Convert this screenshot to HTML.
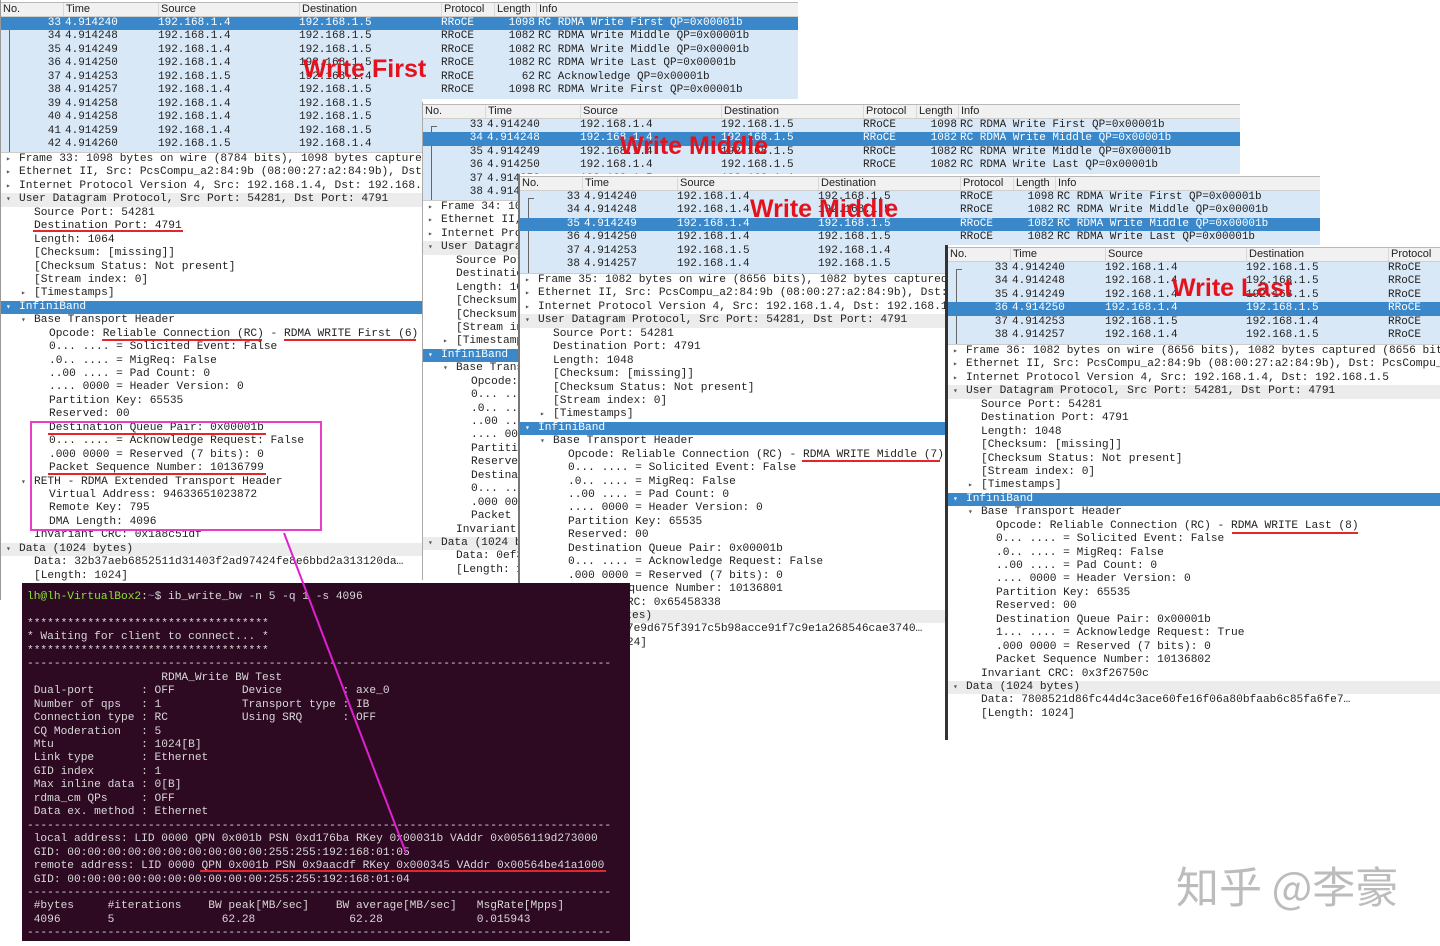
<!DOCTYPE html>
<html><head><meta charset="utf-8"><style>
*{margin:0;padding:0;box-sizing:border-box}
body{width:1440px;height:946px;position:relative;background:#fff;overflow:hidden;font-family:"Liberation Sans",sans-serif}
.p{position:absolute;background:#fff;overflow:hidden}
.hd{position:absolute;left:0;right:0;top:2px;height:15px;background:#f1f1f1;border-top:1px solid #b8b8b8;border-bottom:1px solid #cfcfcf;font:11px/13px "Liberation Sans",sans-serif;color:#222}
.hd span{position:absolute;top:0;border-left:1px solid #d8d8d8;padding-left:2px;height:13px}
.ls{position:absolute;left:0;right:0;top:17px;background:#d9e8f7}
.r{position:relative;height:13.45px;font:11px/13.45px "Liberation Mono",monospace;color:#222;white-space:pre}
.r.sel{background:#3a87c9;color:#fff}
.r span{position:absolute;top:0}
.a{left:0;width:60px;text-align:right}.b{left:64px}.c{left:157px}.d{left:298px}.e{left:440px}.f{left:494px;width:40px;text-align:right}.g{left:537px}
.br{position:absolute;left:8px;top:7px;bottom:0;border-left:1px solid #666}
.br:before{content:"";position:absolute;left:0;top:0;width:5px;border-top:1px solid #666}
.t{position:absolute;left:0;right:0;font:11.2px/13.45px "Liberation Mono",monospace;color:#222;white-space:normal}
.t div{position:relative;height:13.45px;white-space:pre}
.l0{padding-left:18px}.l1{padding-left:33px}.l2{padding-left:48px}
.cl:before,.op:before{position:absolute;font-size:8px;color:#555;top:0}
.l0.cl:before{content:"▸";left:5px}.l0.op:before{content:"▾";left:5px}
.l1.cl:before{content:"▸";left:20px}.l1.op:before{content:"▾";left:20px}
.gr{background:#ececec}
.sl{background:#3a87c9;color:#fff}
.sl:before{color:#fff!important}
.lab{position:absolute;font:bold 25px/25px "Liberation Sans",sans-serif;color:#e3121c;white-space:nowrap}
.ul{position:absolute;height:2px;background:#e3262c}
.term{position:absolute;left:22px;top:583px;width:608px;height:358px;background:#2d0a22;color:#d8d8d8;font:11.2px/13.45px "Liberation Mono",monospace;white-space:pre;padding:8px 0 0 5px;overflow:hidden}
</style></head><body>

<!-- PANEL 1 -->
<div class="p" style="left:0;top:0;width:798px;height:600px;border-left:1px solid #999">
 <div class="hd"><span style="left:0;border:0">No.</span><span style="left:62px">Time</span><span style="left:157px">Source</span><span style="left:298px">Destination</span><span style="left:440px">Protocol</span><span style="left:493px">Length</span><span style="left:535px">Info</span></div>
 <div class="ls" style="height:135px">
  <div class="br"></div>
  <div class="r sel"><span class="a">33</span><span class="b">4.914240</span><span class="c">192.168.1.4</span><span class="d">192.168.1.5</span><span class="e">RRoCE</span><span class="f">1098</span><span class="g">RC RDMA Write First QP=0x00001b</span></div>
  <div class="r"><span class="a">34</span><span class="b">4.914248</span><span class="c">192.168.1.4</span><span class="d">192.168.1.5</span><span class="e">RRoCE</span><span class="f">1082</span><span class="g">RC RDMA Write Middle QP=0x00001b</span></div>
  <div class="r"><span class="a">35</span><span class="b">4.914249</span><span class="c">192.168.1.4</span><span class="d">192.168.1.5</span><span class="e">RRoCE</span><span class="f">1082</span><span class="g">RC RDMA Write Middle QP=0x00001b</span></div>
  <div class="r"><span class="a">36</span><span class="b">4.914250</span><span class="c">192.168.1.4</span><span class="d">192.168.1.5</span><span class="e">RRoCE</span><span class="f">1082</span><span class="g">RC RDMA Write Last QP=0x00001b</span></div>
  <div class="r"><span class="a">37</span><span class="b">4.914253</span><span class="c">192.168.1.5</span><span class="d">192.168.1.4</span><span class="e">RRoCE</span><span class="f">62</span><span class="g">RC Acknowledge QP=0x00001b</span></div>
  <div class="r"><span class="a">38</span><span class="b">4.914257</span><span class="c">192.168.1.4</span><span class="d">192.168.1.5</span><span class="e">RRoCE</span><span class="f">1098</span><span class="g">RC RDMA Write First QP=0x00001b</span></div>
  <div class="r"><span class="a">39</span><span class="b">4.914258</span><span class="c">192.168.1.4</span><span class="d">192.168.1.5</span></div>
  <div class="r"><span class="a">40</span><span class="b">4.914258</span><span class="c">192.168.1.4</span><span class="d">192.168.1.5</span></div>
  <div class="r"><span class="a">41</span><span class="b">4.914259</span><span class="c">192.168.1.4</span><span class="d">192.168.1.5</span></div>
  <div class="r"><span class="a">42</span><span class="b">4.914260</span><span class="c">192.168.1.5</span><span class="d">192.168.1.4</span></div>
 </div>
 <div class="t" style="top:152px;border-top:1px solid #ccc">
<div class="l0 cl">Frame 33: 1098 bytes on wire (8784 bits), 1098 bytes captured (8784 bits)</div>
<div class="l0 cl">Ethernet II, Src: PcsCompu_a2:84:9b (08:00:27:a2:84:9b), Dst: PcsCompu_</div>
<div class="l0 cl">Internet Protocol Version 4, Src: 192.168.1.4, Dst: 192.168.1.5</div>
<div class="l0 op gr">User Datagram Protocol, Src Port: 54281, Dst Port: 4791</div>
<div class="l1">Source Port: 54281</div>
<div class="l1">Destination Port: 4791</div>
<div class="l1">Length: 1064</div>
<div class="l1">[Checksum: [missing]]</div>
<div class="l1">[Checksum Status: Not present]</div>
<div class="l1">[Stream index: 0]</div>
<div class="l1 cl">[Timestamps]</div>
<div class="l0 op sl">InfiniBand</div>
<div class="l1 op">Base Transport Header</div>
<div class="l2">Opcode: Reliable Connection (RC) - RDMA WRITE First (6)</div>
<div class="l2">0... .... = Solicited Event: False</div>
<div class="l2">.0.. .... = MigReq: False</div>
<div class="l2">..00 .... = Pad Count: 0</div>
<div class="l2">.... 0000 = Header Version: 0</div>
<div class="l2">Partition Key: 65535</div>
<div class="l2">Reserved: 00</div>
<div class="l2">Destination Queue Pair: 0x00001b</div>
<div class="l2">0... .... = Acknowledge Request: False</div>
<div class="l2">.000 0000 = Reserved (7 bits): 0</div>
<div class="l2">Packet Sequence Number: 10136799</div>
<div class="l1 op">RETH - RDMA Extended Transport Header</div>
<div class="l2">Virtual Address: 94633651023872</div>
<div class="l2">Remote Key: 795</div>
<div class="l2">DMA Length: 4096</div>
<div class="l1">Invariant CRC: 0x1a8c51df</div>
<div class="l0 op gr">Data (1024 bytes)</div>
<div class="l1">Data: 32b37aeb6852511d31403f2ad97424fe8e6bbd2a313120da…</div>
<div class="l1">[Length: 1024]</div>
 </div>
</div>
<div style="position:absolute;left:422px;top:99px;width:376px;height:5px;background:#fff"></div>

<!-- PANEL 2 -->
<div class="p" style="left:422px;top:102px;width:818px;height:478px;border-left:1px solid #aaa">
 <div class="hd"><span style="left:0;border:0">No.</span><span style="left:62px">Time</span><span style="left:157px">Source</span><span style="left:298px">Destination</span><span style="left:440px">Protocol</span><span style="left:493px">Length</span><span style="left:535px">Info</span></div>
 <div class="ls" style="height:81px">
  <div class="br"></div>
  <div class="r"><span class="a">33</span><span class="b">4.914240</span><span class="c">192.168.1.4</span><span class="d">192.168.1.5</span><span class="e">RRoCE</span><span class="f">1098</span><span class="g">RC RDMA Write First QP=0x00001b</span></div>
  <div class="r sel"><span class="a">34</span><span class="b">4.914248</span><span class="c">192.168.1.4</span><span class="d">192.168.1.5</span><span class="e">RRoCE</span><span class="f">1082</span><span class="g">RC RDMA Write Middle QP=0x00001b</span></div>
  <div class="r"><span class="a">35</span><span class="b">4.914249</span><span class="c">192.168.1.4</span><span class="d">192.168.1.5</span><span class="e">RRoCE</span><span class="f">1082</span><span class="g">RC RDMA Write Middle QP=0x00001b</span></div>
  <div class="r"><span class="a">36</span><span class="b">4.914250</span><span class="c">192.168.1.4</span><span class="d">192.168.1.5</span><span class="e">RRoCE</span><span class="f">1082</span><span class="g">RC RDMA Write Last QP=0x00001b</span></div>
  <div class="r"><span class="a">37</span><span class="b">4.914253</span><span class="c">192.168.1.5</span><span class="d">192.168.1.4</span></div>
  <div class="r"><span class="a">38</span><span class="b">4.914257</span><span class="c">192.168.1.4</span><span class="d">192.168.1.5</span></div>
 </div>
 <div class="t" style="top:98px;border-top:1px solid #ccc">
<div class="l0 cl">Frame 34: 1082 bytes on wire (8656 bits), 1082 bytes captured</div>
<div class="l0 cl">Ethernet II, Src: PcsCompu_a2:84:9b</div>
<div class="l0 cl">Internet Protocol Version 4</div>
<div class="l0 op gr">User Datagram Protocol</div>
<div class="l1">Source Port: 54281</div>
<div class="l1">Destination Port: 4791</div>
<div class="l1">Length: 1048</div>
<div class="l1">[Checksum: [missing]]</div>
<div class="l1">[Checksum Status: Not present]</div>
<div class="l1">[Stream index: 0]</div>
<div class="l1 cl">[Timestamps]</div>
<div class="l0 op sl">InfiniBand</div>
<div class="l1 op">Base Transport Header</div>
<div class="l2">Opcode: Reliable Connection (RC)</div>
<div class="l2">0... .... = Solicited Event: False</div>
<div class="l2">.0.. .... = MigReq: False</div>
<div class="l2">..00 .... = Pad Count: 0</div>
<div class="l2">.... 0000 = Header Version: 0</div>
<div class="l2">Partition Key: 65535</div>
<div class="l2">Reserved: 00</div>
<div class="l2">Destination Queue Pair: 0x00001b</div>
<div class="l2">0... .... = Acknowledge Request</div>
<div class="l2">.000 0000 = Reserved (7 bits): 0</div>
<div class="l2">Packet Sequence Number: 10136800</div>
<div class="l1">Invariant CRC: 0x5a1b22c4</div>
<div class="l0 op gr">Data (1024 bytes)</div>
<div class="l1">Data: 0ef3a1</div>
<div class="l1">[Length: 1024]</div>
 </div>
</div>

<!-- PANEL 3 -->
<div class="p" style="left:518px;top:174px;width:802px;height:476px;border-left:2px solid #777">
 <div class="hd"><span style="left:0;border:0">No.</span><span style="left:62px">Time</span><span style="left:157px">Source</span><span style="left:298px">Destination</span><span style="left:440px">Protocol</span><span style="left:493px">Length</span><span style="left:535px">Info</span></div>
 <div class="ls" style="height:82px">
  <div class="br"></div>
  <div class="r"><span class="a">33</span><span class="b">4.914240</span><span class="c">192.168.1.4</span><span class="d">192.168.1.5</span><span class="e">RRoCE</span><span class="f">1098</span><span class="g">RC RDMA Write First QP=0x00001b</span></div>
  <div class="r"><span class="a">34</span><span class="b">4.914248</span><span class="c">192.168.1.4</span><span class="d">192.168.1.5</span><span class="e">RRoCE</span><span class="f">1082</span><span class="g">RC RDMA Write Middle QP=0x00001b</span></div>
  <div class="r sel"><span class="a">35</span><span class="b">4.914249</span><span class="c">192.168.1.4</span><span class="d">192.168.1.5</span><span class="e">RRoCE</span><span class="f">1082</span><span class="g">RC RDMA Write Middle QP=0x00001b</span></div>
  <div class="r"><span class="a">36</span><span class="b">4.914250</span><span class="c">192.168.1.4</span><span class="d">192.168.1.5</span><span class="e">RRoCE</span><span class="f">1082</span><span class="g">RC RDMA Write Last QP=0x00001b</span></div>
  <div class="r"><span class="a">37</span><span class="b">4.914253</span><span class="c">192.168.1.5</span><span class="d">192.168.1.4</span></div>
  <div class="r"><span class="a">38</span><span class="b">4.914257</span><span class="c">192.168.1.4</span><span class="d">192.168.1.5</span></div>
 </div>
 <div class="t" style="top:99px;border-top:1px solid #ccc">
<div class="l0 cl">Frame 35: 1082 bytes on wire (8656 bits), 1082 bytes captured (8656 bits)</div>
<div class="l0 cl">Ethernet II, Src: PcsCompu_a2:84:9b (08:00:27:a2:84:9b), Dst: PcsCompu_</div>
<div class="l0 cl">Internet Protocol Version 4, Src: 192.168.1.4, Dst: 192.168.1.5</div>
<div class="l0 op gr">User Datagram Protocol, Src Port: 54281, Dst Port: 4791</div>
<div class="l1">Source Port: 54281</div>
<div class="l1">Destination Port: 4791</div>
<div class="l1">Length: 1048</div>
<div class="l1">[Checksum: [missing]]</div>
<div class="l1">[Checksum Status: Not present]</div>
<div class="l1">[Stream index: 0]</div>
<div class="l1 cl">[Timestamps]</div>
<div class="l0 op sl">InfiniBand</div>
<div class="l1 op">Base Transport Header</div>
<div class="l2">Opcode: Reliable Connection (RC) - RDMA WRITE Middle (7)</div>
<div class="l2">0... .... = Solicited Event: False</div>
<div class="l2">.0.. .... = MigReq: False</div>
<div class="l2">..00 .... = Pad Count: 0</div>
<div class="l2">.... 0000 = Header Version: 0</div>
<div class="l2">Partition Key: 65535</div>
<div class="l2">Reserved: 00</div>
<div class="l2">Destination Queue Pair: 0x00001b</div>
<div class="l2">0... .... = Acknowledge Request: False</div>
<div class="l2">.000 0000 = Reserved (7 bits): 0</div>
<div class="l2">Packet Sequence Number: 10136801</div>
<div class="l1">Invariant CRC: 0x65458338</div>
<div class="l0 op gr">Data (1024 bytes)</div>
<div class="l1">Data: 5c01a7e9d675f3917c5b98acce91f7c9e1a268546cae3740…</div>
<div class="l1">[Length: 1024]</div>
 </div>
</div>

<!-- PANEL 4 -->
<div class="p" style="left:945px;top:245px;width:495px;height:495px;border-left:3px solid #333">
 <div class="hd"><span style="left:0;border:0">No.</span><span style="left:62px">Time</span><span style="left:157px">Source</span><span style="left:298px">Destination</span><span style="left:440px">Protocol</span></div>
 <div class="ls" style="height:82px">
  <div class="br"></div>
  <div class="r"><span class="a">33</span><span class="b">4.914240</span><span class="c">192.168.1.4</span><span class="d">192.168.1.5</span><span class="e">RRoCE</span></div>
  <div class="r"><span class="a">34</span><span class="b">4.914248</span><span class="c">192.168.1.4</span><span class="d">192.168.1.5</span><span class="e">RRoCE</span></div>
  <div class="r"><span class="a">35</span><span class="b">4.914249</span><span class="c">192.168.1.4</span><span class="d">192.168.1.5</span><span class="e">RRoCE</span></div>
  <div class="r sel"><span class="a">36</span><span class="b">4.914250</span><span class="c">192.168.1.4</span><span class="d">192.168.1.5</span><span class="e">RRoCE</span></div>
  <div class="r"><span class="a">37</span><span class="b">4.914253</span><span class="c">192.168.1.5</span><span class="d">192.168.1.4</span><span class="e">RRoCE</span></div>
  <div class="r"><span class="a">38</span><span class="b">4.914257</span><span class="c">192.168.1.4</span><span class="d">192.168.1.5</span><span class="e">RRoCE</span></div>
 </div>
 <div class="t" style="top:99px;border-top:1px solid #ccc">
<div class="l0 cl">Frame 36: 1082 bytes on wire (8656 bits), 1082 bytes captured (8656 bits)</div>
<div class="l0 cl">Ethernet II, Src: PcsCompu_a2:84:9b (08:00:27:a2:84:9b), Dst: PcsCompu_</div>
<div class="l0 cl">Internet Protocol Version 4, Src: 192.168.1.4, Dst: 192.168.1.5</div>
<div class="l0 op gr">User Datagram Protocol, Src Port: 54281, Dst Port: 4791</div>
<div class="l1">Source Port: 54281</div>
<div class="l1">Destination Port: 4791</div>
<div class="l1">Length: 1048</div>
<div class="l1">[Checksum: [missing]]</div>
<div class="l1">[Checksum Status: Not present]</div>
<div class="l1">[Stream index: 0]</div>
<div class="l1 cl">[Timestamps]</div>
<div class="l0 op sl">InfiniBand</div>
<div class="l1 op">Base Transport Header</div>
<div class="l2">Opcode: Reliable Connection (RC) - RDMA WRITE Last (8)</div>
<div class="l2">0... .... = Solicited Event: False</div>
<div class="l2">.0.. .... = MigReq: False</div>
<div class="l2">..00 .... = Pad Count: 0</div>
<div class="l2">.... 0000 = Header Version: 0</div>
<div class="l2">Partition Key: 65535</div>
<div class="l2">Reserved: 00</div>
<div class="l2">Destination Queue Pair: 0x00001b</div>
<div class="l2">1... .... = Acknowledge Request: True</div>
<div class="l2">.000 0000 = Reserved (7 bits): 0</div>
<div class="l2">Packet Sequence Number: 10136802</div>
<div class="l1">Invariant CRC: 0x3f26750c</div>
<div class="l0 op gr">Data (1024 bytes)</div>
<div class="l1">Data: 7808521d86fc44d4c3ace60fe16f06a80bfaab6c85fa6fe7…</div>
<div class="l1">[Length: 1024]</div>
 </div>
</div>

<!-- TERMINAL -->
<div class="term"><span style="color:#8ae234">lh@lh-VirtualBox2</span>:<span style="color:#729fcf">~</span>$ ib_write_bw -n 5 -q 1 -s 4096

************************************
* Waiting for client to connect... *
************************************
---------------------------------------------------------------------------------------
                    RDMA_Write BW Test
 Dual-port       : OFF          Device         : axe_0
 Number of qps   : 1            Transport type : IB
 Connection type : RC           Using SRQ      : OFF
 CQ Moderation   : 5
 Mtu             : 1024[B]
 Link type       : Ethernet
 GID index       : 1
 Max inline data : 0[B]
 rdma_cm QPs     : OFF
 Data ex. method : Ethernet
---------------------------------------------------------------------------------------
 local address: LID 0000 QPN 0x001b PSN 0xd176ba RKey 0x00031b VAddr 0x0056119d273000
 GID: 00:00:00:00:00:00:00:00:00:00:255:255:192:168:01:05
 remote address: LID 0000 QPN 0x001b PSN 0x9aacdf RKey 0x000345 VAddr 0x00564be41a1000
 GID: 00:00:00:00:00:00:00:00:00:00:255:255:192:168:01:04
---------------------------------------------------------------------------------------
 #bytes     #iterations    BW peak[MB/sec]    BW average[MB/sec]   MsgRate[Mpps]
 4096       5                62.28              62.28              0.015943
---------------------------------------------------------------------------------------</div>

<!-- annotations -->
<div class="ul" style="left:33px;top:230px;width:150px"></div>
<div class="ul" style="left:102px;top:339px;width:160px"></div>
<div class="ul" style="left:284px;top:339px;width:132px"></div>
<div class="ul" style="left:48px;top:433px;width:218px"></div>
<div class="ul" style="left:48px;top:473px;width:218px"></div>
<div class="ul" style="left:802px;top:460px;width:138px"></div>
<div class="ul" style="left:1232px;top:532px;width:126px"></div>
<div class="ul" style="left:200px;top:870px;width:406px"></div>
<div style="position:absolute;left:30px;top:421px;width:292px;height:110px;border:2px solid #e83ec8"></div>
<svg style="position:absolute;left:0;top:0" width="1440" height="946"><line x1="284" y1="533" x2="406" y2="853" stroke="#e020d0" stroke-width="2"/></svg>

<div class="lab" style="left:303px;top:57px">Write First</div>
<div class="lab" style="left:620px;top:134px">Write Middle</div>
<div class="lab" style="left:750px;top:197px">Write Middle</div>
<div class="lab" style="left:1172px;top:276px">Write Last</div>

<div style="position:absolute;left:1176px;top:860px;font:43px/50px 'Noto Sans CJK SC',sans-serif;color:#bcbcbc;white-space:nowrap">知乎 @李豪</div>
</body></html>
